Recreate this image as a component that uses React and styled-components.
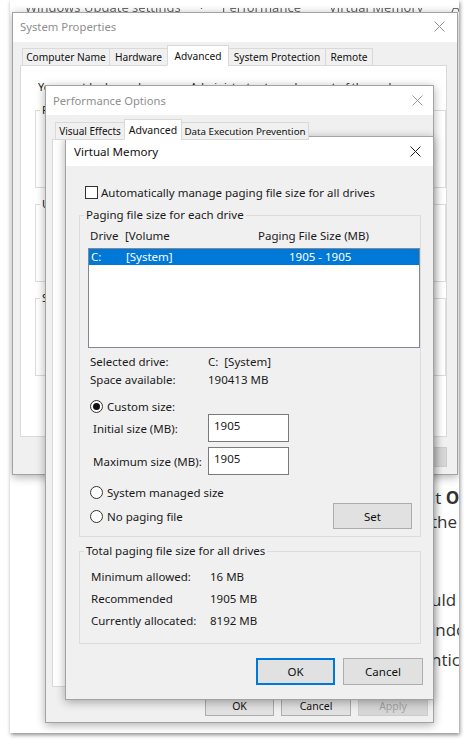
import styled, { createGlobalStyle } from "styled-components";

const GlobalStyle = createGlobalStyle`
  html, body { margin: 0; padding: 0; background: #fff; }
  body { font-family: "Noto Sans", "Open Sans", sans-serif; color: #1a1a1a; }
  * { box-sizing: border-box; }
`;

const Page = styled.div`
  width: 474px;
  height: 747px;
  padding-left: 10px;
  overflow: hidden;
  background: #fff;
`;

// the screenshot picture that holds the three dialogs
const Shot = styled.div`
  position: relative;
  width: 449px;
  height: 733px;
  overflow: hidden;
  background: #fff;
  box-shadow: 1px 2px 4px rgba(0, 0, 0, 0.45);
`;

// the sliver of the page above the dialogs, cut off by the crop
const TopStrip = styled.div`
  height: 12px;
  padding-top: 8px;
`;

const StripClip = styled.div`
  height: 4px;
  overflow: hidden;
`;

const StripRow = styled.div`
  display: flex;
  align-items: flex-start;
  gap: 14px;
  margin-top: -9px;
  padding-left: 15px;
  font-size: 13px;
  line-height: 16px;
  color: #6a6a6a;
  white-space: nowrap;
  filter: blur(0.3px);
`;

const Swatch = styled.span`
  display: inline-block;
  width: 13px;
  height: 16px;
  background: ${(p) => p.$color};
`;

const Backdrop = styled.div`
  margin-top: 474px;
  font-family: "Open Sans", "Noto Sans", sans-serif;
  font-size: 17px;
  color: #333;
`;

const BackLine = styled.div`
  height: ${(p) => p.$h}px;
  line-height: ${(p) => p.$h}px;
  margin-top: ${(p) => p.$gap || 0}px;
  padding-left: 421px;
  white-space: nowrap;
`;

const Window = styled.div`
  position: absolute;
  left: ${(p) => p.$x}px;
  top: ${(p) => p.$y}px;
  width: ${(p) => p.$w}px;
  height: ${(p) => p.$h}px;
  background: #f0f0f0;
  border: 1px solid #a3a3a3;
  box-shadow: 0 2px 9px rgba(0, 0, 0, 0.32);
  display: flex;
  flex-direction: column;
`;

const TitleBar = styled.div`
  flex: none;
  height: 29px;
  background: #fff;
  display: flex;
  align-items: center;
  justify-content: space-between;
  padding: 0 ${(p) => p.$pr}px ${(p) => p.$lift || 0}px ${(p) => p.$pl}px;
  font-size: ${(p) => p.$fs}px;
  color: ${(p) => (p.$active ? "#111" : "#8f8f8f")};
`;

const Body = styled.div`
  flex: 1;
  display: flex;
  flex-direction: column;
  padding: ${(p) => p.$pad};
  min-height: 0;
`;

const TabStrip = styled.div`
  display: flex;
  align-items: flex-end;
  height: 21px;
  padding-left: ${(p) => p.$indent}px;
  margin-bottom: -1px;
  position: relative;
  z-index: 1;
`;

const Tab = styled.div`
  width: ${(p) => p.$w}px;
  height: ${(p) => (p.$active ? 21 : 18)}px;
  border: 1px solid #d9d9d9;
  border-bottom: ${(p) => (p.$active ? "1px solid #fff" : "1px solid #d9d9d9")};
  margin-left: ${(p) => (p.$first ? 0 : -1)}px;
  background: ${(p) => (p.$active ? "#fff" : "#f0f0f0")};
  display: flex;
  align-items: center;
  justify-content: center;
  font-size: ${(p) => p.$fs}px;
  color: #111;
  white-space: nowrap;
  overflow: hidden;
`;

const Panel = styled.div`
  height: ${(p) => p.$h}px;
  flex: none;
  background: #fff;
  border: 1px solid #d9d9d9;
  padding: ${(p) => p.$pad || "0"};
  overflow: hidden;
`;

const ButtonRow = styled.div`
  display: flex;
  justify-content: flex-end;
  gap: ${(p) => p.$gap}px;
  margin-top: ${(p) => p.$top}px;
  margin-right: ${(p) => p.$right || 0}px;
`;

const Button = styled.div`
  width: ${(p) => p.$w}px;
  height: ${(p) => p.$h}px;
  background: ${(p) => (p.$disabled ? "#d6d6d6" : "#e1e1e1")};
  border: ${(p) => (p.$default ? "2px solid #0078d7" : p.$disabled ? "1px solid #cccccc" : "1px solid #adadad")};
  color: ${(p) => (p.$disabled ? "#a3a3a3" : "#111")};
  font-size: ${(p) => p.$fs}px;
  display: flex;
  align-items: center;
  justify-content: center;
`;

const Intro = styled.div`
  font-size: 11px;
  line-height: 16px;
  padding-left: 3px;
  white-space: nowrap;
`;

const Group = styled.fieldset`
  margin: ${(p) => p.$top || 0}px 0 0 0;
  padding: 0;
  border: 1px solid #dcdcdc;
  min-width: 0;
`;

const GroupLabel = styled.legend`
  margin-left: ${(p) => p.$indent || 4}px;
  padding: 0 2px;
  font-size: ${(p) => p.$fs || 11.5}px;
  line-height: 16px;
  color: #1a1a1a;
  white-space: nowrap;
`;

const GroupInner = styled.div`
  height: ${(p) => (p.$h ? `${p.$h}px` : "auto")};
  padding: ${(p) => p.$pad || "0"};
`;

const CheckRow = styled.div`
  display: flex;
  align-items: center;
  gap: 3px;
  height: 16px;
  margin-top: 18px;
  padding-left: 6px;
  font-size: 11.5px;
  white-space: nowrap;
`;

const Box = styled.span`
  width: 13px;
  height: 13px;
  border: 1px solid #333;
  background: #fff;
  flex: none;
`;

const ColumnHead = styled.div`
  display: grid;
  grid-template-columns: 35px 133px 1fr;
  padding-left: 2px;
  height: 16px;
  line-height: 16px;
  font-size: 11.5px;
  white-space: nowrap;
`;

const DriveList = styled.div`
  height: 100px;
  margin-top: 4px;
  background: #fff;
  border: 1px solid #828790;
`;

const DriveRow = styled.div`
  display: grid;
  grid-template-columns: 35px 163px 1fr;
  height: 16px;
  line-height: 16px;
  padding-left: 2px;
  font-size: 11.5px;
  background: ${(p) => (p.$selected ? "#0078d7" : "transparent")};
  color: ${(p) => (p.$selected ? "#fff" : "#111")};
  white-space: nowrap;
`;

const InfoGrid = styled.div`
  display: grid;
  grid-template-columns: ${(p) => p.$col}px 1fr;
  grid-auto-rows: ${(p) => p.$row}px;
  align-items: center;
  margin-top: ${(p) => p.$top || 0}px;
  padding-left: ${(p) => p.$indent || 0}px;
  font-size: 11.5px;
  white-space: nowrap;
`;

const RadioRow = styled.div`
  display: flex;
  align-items: center;
  gap: 4px;
  height: 16px;
  margin-top: ${(p) => p.$top || 0}px;
  padding-left: 2px;
  font-size: 11.5px;
  white-space: nowrap;
`;

const Radio = styled.span`
  width: 13px;
  height: 13px;
  border-radius: 50%;
  border: 1px solid #333;
  background: #fff;
  display: flex;
  align-items: center;
  justify-content: center;
  flex: none;
  &::after {
    content: "";
    width: 7px;
    height: 7px;
    border-radius: 50%;
    background: ${(p) => (p.$checked ? "#111" : "transparent")};
  }
`;

const SizeRow = styled.div`
  display: grid;
  grid-template-columns: 115px 81px;
  align-items: center;
  margin-top: ${(p) => p.$top || 0}px;
  padding-left: 5px;
  font-size: 11.5px;
  white-space: nowrap;
`;

const SizeInput = styled.div`
  height: 28px;
  background: #fff;
  border: 1px solid #7a7a7a;
  padding: 3px 0 0 5px;
  font-size: 11.5px;
  line-height: 16px;
`;

// two radio choices on the left, the Set button level with the second one
const ChoiceGrid = styled.div`
  display: grid;
  grid-template-columns: 1fr auto;
  grid-template-rows: 16px 16px;
  row-gap: 8px;
  margin-top: 9px;
  padding-right: 8px;
`;

const SetCell = styled.div`
  grid-column: 2;
  grid-row: 2;
  align-self: center;
`;

const Close = ({ color }) => (
  <svg width="11" height="11" viewBox="0 0 11 11">
    <path d="M0.5 0.5 L10.5 10.5 M10.5 0.5 L0.5 10.5" stroke={color} strokeWidth="1" fill="none" />
  </svg>
);

const SystemProperties = () => (
  <Window $x={2} $y={12} $w={446} $h={463}>
    <TitleBar $pl={7} $pr={12} $fs={11.3} $lift={3}>
      System Properties
      <Close color="#8f8f8f" />
    </TitleBar>
    <Body $pad="3px 10px 0 7px">
      <TabStrip $indent={2}>
        <Tab $w={88} $fs={10.2} $first>Computer Name</Tab>
        <Tab $w={59} $fs={10.2}>Hardware</Tab>
        <Tab $w={62} $fs={10.2} $active>Advanced</Tab>
        <Tab $w={98} $fs={10.2}>System Protection</Tab>
        <Tab $w={48} $fs={10.2}>Remote</Tab>
      </TabStrip>
      <Panel $h={372} $pad="13px 0 0 14px">
        <Intro>You must be logged on as an Administrator to make most of these changes.</Intro>
        <Group $top={7}>
          <GroupLabel $fs={11}>Performance</GroupLabel>
          <GroupInner $h={69} />
        </Group>
        <Group $top={8}>
          <GroupLabel $fs={11}>User Profiles</GroupLabel>
          <GroupInner $h={69} />
        </Group>
        <Group $top={8}>
          <GroupLabel $fs={11}>Startup and Recovery</GroupLabel>
          <GroupInner $h={69} />
        </Group>
      </Panel>
      <ButtonRow $gap={7} $top={10}>
        <Button $w={75} $h={20} $fs={11}>OK</Button>
        <Button $w={75} $h={20} $fs={11}>Cancel</Button>
        <Button $w={75} $h={20} $fs={11} $disabled>Apply</Button>
      </ButtonRow>
    </Body>
  </Window>
);

const PerformanceOptions = () => (
  <Window $x={35} $y={85} $w={389} $h={638}>
    <TitleBar $pl={7} $pr={10} $fs={11.2}>
      Performance Options
      <Close color="#9a9a9a" />
    </TitleBar>
    <Body $pad="4px 5px 0 6px">
      <TabStrip $indent={3}>
        <Tab $w={70} $fs={10} $first>Visual Effects</Tab>
        <Tab $w={58} $fs={10.5} $active>Advanced</Tab>
        <Tab $w={128} $fs={9.8}>Data Execution Prevention</Tab>
      </TabStrip>
      <Panel $h={548} />
      <ButtonRow $gap={7} $top={9}>
        <Button $w={69} $h={20} $fs={10.5}>OK</Button>
        <Button $w={70} $h={20} $fs={10.5}>Cancel</Button>
        <Button $w={70} $h={20} $fs={10.5} $disabled>Apply</Button>
      </ButtonRow>
    </Body>
  </Window>
);

const VirtualMemory = () => (
  <Window $x={55} $y={136} $w={369} $h={564}>
    <TitleBar $pl={8} $pr={12} $fs={11.6} $active>
      Virtual Memory
      <Close color="#222" />
    </TitleBar>
    <Body $pad="0 12px 0 13px">
      <CheckRow>
        <Box />
        Automatically manage paging file size for all drives
      </CheckRow>

      <Group $top={7}>
        <GroupLabel>Paging file size for each drive</GroupLabel>
        <GroupInner $pad="5px 0 12px 8px">
          <ColumnHead>
            <span>Drive</span>
            <span>[Volume</span>
            <span>Paging File Size (MB)</span>
          </ColumnHead>
          <DriveList>
            <DriveRow $selected>
              <span>C:</span>
              <span>[System]</span>
              <span>1905 - 1905</span>
            </DriveRow>
          </DriveList>
          <InfoGrid $col={118} $row={18} $top={4} $indent={2}>
            <span>Selected drive:</span>
            <span>C:&nbsp; [System]</span>
            <span>Space available:</span>
            <span>190413 MB</span>
          </InfoGrid>
          <RadioRow $top={10}>
            <Radio $checked />
            Custom size:
          </RadioRow>
          <SizeRow>
            <span>Initial size (MB):</span>
            <SizeInput>1905</SizeInput>
          </SizeRow>
          <SizeRow $top={5}>
            <span>Maximum size (MB):</span>
            <SizeInput>1905</SizeInput>
          </SizeRow>
          <ChoiceGrid>
            <RadioRow>
              <Radio />
              System managed size
            </RadioRow>
            <RadioRow style={{ gridRow: 2 }}>
              <Radio />
              No paging file
            </RadioRow>
            <SetCell>
              <Button $w={79} $h={26} $fs={11.5}>Set</Button>
            </SetCell>
          </ChoiceGrid>
        </GroupInner>
      </Group>

      <Group $top={6}>
        <GroupLabel>Total paging file size for all drives</GroupLabel>
        <GroupInner $pad="6px 0 12px 11px">
          <InfoGrid $col={119} $row={22}>
            <span>Minimum allowed:</span>
            <span>16 MB</span>
            <span>Recommended</span>
            <span>1905 MB</span>
            <span>Currently allocated:</span>
            <span>8192 MB</span>
          </InfoGrid>
        </GroupInner>
      </Group>

      <ButtonRow $gap={8} $top={14} $right={-2}>
        <Button $w={79} $h={27} $fs={11.5} $default>OK</Button>
        <Button $w={80} $h={27} $fs={11.5}>Cancel</Button>
      </ButtonRow>
    </Body>
  </Window>
);

export default function App() {
  return (
    <Page>
      <GlobalStyle />
      <Shot>
        <TopStrip>
          <StripClip>
            <StripRow>
              <span>Windows Update settings</span>
              <span>⋮</span>
              <span>Performance</span>
              <Swatch $color="#2f6fd6" />
              <span>Virtual Memory</span>
              <Swatch $color="#d9343a" />
              <span>Advanced</span>
            </StripRow>
          </StripClip>
        </TopStrip>
        <Backdrop>
          <BackLine $h={24}>
            it <b>OK</b>
          </BackLine>
          <BackLine $h={24}>the</BackLine>
          <BackLine $h={30} $gap={51}>uld</BackLine>
          <BackLine $h={30}>indow</BackLine>
          <BackLine $h={30}>ntication</BackLine>
        </Backdrop>
        <SystemProperties />
        <PerformanceOptions />
        <VirtualMemory />
      </Shot>
    </Page>
  );
}
